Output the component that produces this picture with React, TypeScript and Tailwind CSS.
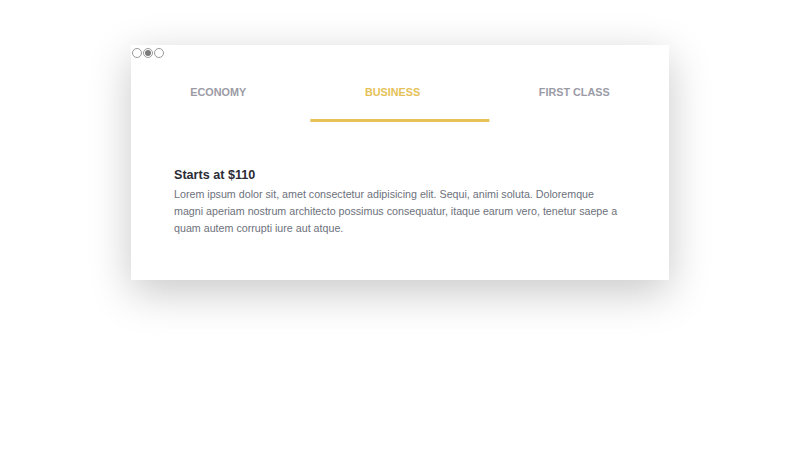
import React, { useState } from "react";

const tabs = ["Economy", "Business", "First Class"];

export default function App() {
  const [active, setActive] = useState(1);

  return (
    <div className="w-[800px] h-[450px] bg-white overflow-hidden pt-[45px] pl-[131px] font-['Liberation_Sans',Arial,sans-serif]">
      <div className="w-[538px] h-[235px] bg-white shadow-[0_12px_40px_rgba(0,0,0,0.22)]">
        {/* radio toggles */}
        <div className="flex gap-[1px] pt-[2px] pl-[1px] h-[14px]">
          {tabs.map((t, i) => (
            <span
              key={t}
              onClick={() => setActive(i)}
              className="w-[10px] h-[10px] mt-[1px] rounded-full border border-[#9a9a9a] bg-white flex items-center justify-center"
            >
              {i === active && <span className="w-[6px] h-[6px] rounded-full bg-[#7a7a7a]" />}
            </span>
          ))}
        </div>

        {/* tabs */}
        <div className="pt-[26px]">
          <div className="flex justify-around">
            {tabs.map((t, i) => (
              <button
                key={t}
                onClick={() => setActive(i)}
                className={
                  "uppercase font-bold text-[10.8px] leading-[14px] " +
                  (i === active ? "text-[#e5c157]" : "text-[#9b9ba6]")
                }
              >
                {t}
              </button>
            ))}
          </div>
          <div className="mt-[20px] h-[3px]">
            <div
              className="w-1/3 h-[3px] bg-[#e5c157]"
              style={{ transform: `translateX(${active * 100}%)` }}
            />
          </div>
        </div>

        {/* content */}
        <div className="px-[43px] pt-[45px]">
          <h3 className="text-[12.6px] leading-[17px] font-bold text-[#2b2b36] mb-[2px]">Starts at $110</h3>
          <p className="text-[10.7px] leading-[17px] text-[#6d717c]">
            Lorem ipsum dolor sit, amet consectetur adipisicing elit. Sequi, animi soluta. Doloremque magni
            aperiam nostrum architecto possimus consequatur, itaque earum vero, tenetur saepe a quam autem
            corrupti iure aut atque.
          </p>
        </div>
      </div>
    </div>
  );
}
